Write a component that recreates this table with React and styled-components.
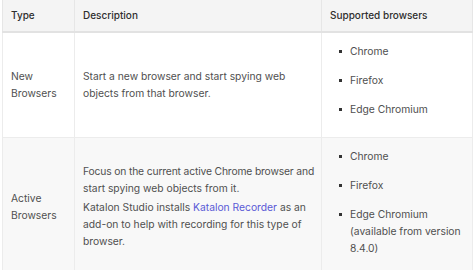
import React from "react";
import styled, { createGlobalStyle } from "styled-components";

const Global = createGlobalStyle`
  html, body {
    margin: 0;
    padding: 0;
    background: #ffffff;
  }
  body {
    font-family: Inter, "Noto Sans", sans-serif;
  }
`;

const Wrap = styled.div`
  width: 474px;
  height: 270px;
  overflow: hidden;
  padding: 0 2px;
  box-sizing: border-box;
`;

const Table = styled.table`
  width: 470px;
  border-collapse: collapse;
  table-layout: fixed;
  font-size: 10.3px;
  line-height: 17px;
  color: #505050;
`;

const Col = styled.col`
  width: ${(p) => p.w}px;
`;

const HeadCell = styled.th`
  height: 31px;
  padding: 0 4px 0 8px;
  text-align: left;
  font-size: 10px;
  font-weight: 500;
  color: #2e2e2e;
  background: #f4f4f4;
  border-left: 1px solid #e6e6e6;
  border-right: 1px solid #e6e6e6;
  border-bottom: 2px solid #e2e2e2;
`;

const Row = styled.tr`
  background: ${(p) => (p.shaded ? "#f8f8f8" : "#ffffff")};
  height: ${(p) => p.h}px;
`;

const Cell = styled.td`
  padding: 10px 0 10px 8px;
  vertical-align: middle;
  border-left: 1px solid #ececec;
  border-right: 1px solid #ececec;
  border-bottom: 1px solid #ececec;
`;

const Para = styled.p`
  margin: 0 0 2px;
`;

const Line = styled.span`
  white-space: nowrap;
  letter-spacing: -0.15px;
`;

const Link = styled.a`
  color: #5a5ad6;
  text-decoration: none;
`;

const List = styled.ul`
  margin: 0 0 9px;
  padding: 0 4px 0 20px;
  list-style: none;
`;

const Item = styled.li`
  position: relative;
  margin-bottom: 12px;
  &:last-child {
    margin-bottom: 0;
  }
  &::before {
    content: "";
    position: absolute;
    left: -11px;
    top: 7px;
    width: 3px;
    height: 3px;
    background: #333;
  }
`;

export default function App() {
  return (
    <Wrap>
      <Global />
      <Table>
        <colgroup>
          <Col w={72} />
          <Col w={247} />
          <Col w={151} />
        </colgroup>
        <thead>
          <tr>
            <HeadCell>Type</HeadCell>
            <HeadCell>Description</HeadCell>
            <HeadCell>Supported browsers</HeadCell>
          </tr>
        </thead>
        <tbody>
          <Row h={104}>
            <Cell>New Browsers</Cell>
            <Cell>Start a new browser and start spying web objects from that browser.</Cell>
            <Cell>
              <List>
                <Item>Chrome</Item>
                <Item>Firefox</Item>
                <Item>Edge Chromium</Item>
              </List>
            </Cell>
          </Row>
          <Row shaded h={134}>
            <Cell>Active Browsers</Cell>
            <Cell>
              <Para>
                <Line>Focus on the current active Chrome browser and</Line>
                <br />
                start spying web objects from it.
              </Para>
              <Para>
                Katalon Studio installs <Link href="#">Katalon Recorder</Link> as an add-on to help with recording for this type of browser.
              </Para>
            </Cell>
            <Cell>
              <List>
                <Item>Chrome</Item>
                <Item>Firefox</Item>
                <Item>Edge Chromium (available from version 8.4.0)</Item>
              </List>
            </Cell>
          </Row>
        </tbody>
      </Table>
    </Wrap>
  );
}
